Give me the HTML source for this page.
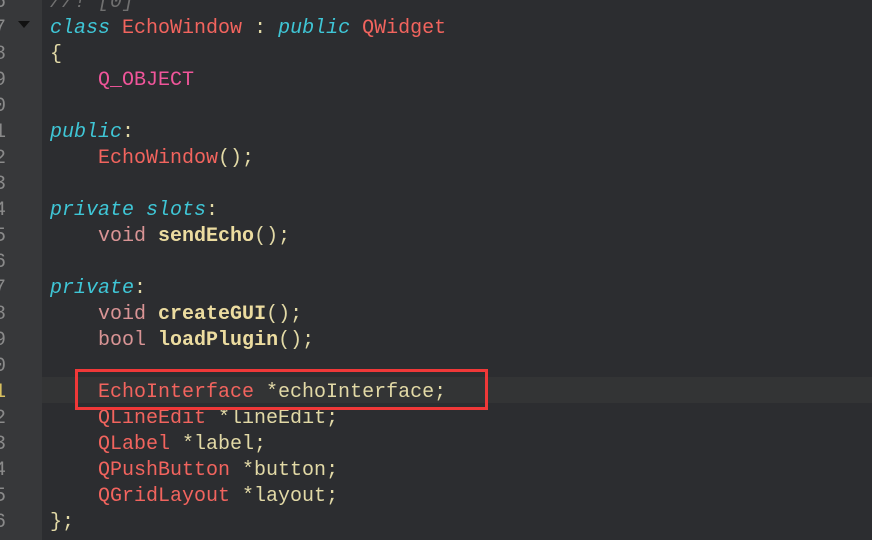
<!DOCTYPE html>
<html><head><meta charset="utf-8"><style>
html,body{margin:0;padding:0;width:872px;height:540px;overflow:hidden;background:#2c2d30;}
.g{position:absolute;left:0;top:0;width:42px;height:540px;background:#37383a;}
.hl{position:absolute;left:42px;top:377px;width:830px;height:26px;background:#333435;}
.ln{position:absolute;left:-10px;font:20px "Liberation Mono",monospace;color:#8a8a8a;width:16px;text-align:right;}
.code{position:absolute;left:50px;top:3px;font:20px/26px "Liberation Mono",monospace;color:#e2d9a6;white-space:pre;}
.lns{position:absolute;left:0;top:3px;}
.l{position:absolute;left:0;height:26px;}
.k{color:#3fc6d6;font-style:italic}
.c{color:#f2645e}
.m{color:#f0559a}
.t{color:#d99495}
.f{color:#ecdca0;font-weight:bold}
.cm{color:#707070;font-style:italic}
.box{position:absolute;left:75px;top:369px;width:407px;height:35px;border:3px solid #f03838;}
.tri{position:absolute;left:18px;top:21px;width:0;height:0;border-left:6px solid transparent;border-right:6px solid transparent;border-top:7px solid #111;}
</style></head><body>
<div class="g"></div>
<div class="hl"></div>
<div class="tri"></div>
<div class="code">
<div class="l" style="top:-13px"><span class="cm">//! [0]</span></div>
<div class="l" style="top:13px"><span class="k">class</span> <span class="c">EchoWindow</span> : <span class="k">public</span> <span class="c">QWidget</span></div>
<div class="l" style="top:39px">{</div>
<div class="l" style="top:65px">    <span class="m">Q_OBJECT</span></div>
<div class="l" style="top:117px"><span class="k">public</span>:</div>
<div class="l" style="top:143px">    <span class="c">EchoWindow</span>();</div>
<div class="l" style="top:195px"><span class="k">private slots</span>:</div>
<div class="l" style="top:221px">    <span class="t">void</span> <span class="f">sendEcho</span>();</div>
<div class="l" style="top:273px"><span class="k">private</span>:</div>
<div class="l" style="top:299px">    <span class="t">void</span> <span class="f">createGUI</span>();</div>
<div class="l" style="top:325px">    <span class="t">bool</span> <span class="f">loadPlugin</span>();</div>
<div class="l" style="top:377px">    <span class="c">EchoInterface</span> *echoInterface;</div>
<div class="l" style="top:403px">    <span class="c">QLineEdit</span> *lineEdit;</div>
<div class="l" style="top:429px">    <span class="c">QLabel</span> *label;</div>
<div class="l" style="top:455px">    <span class="c">QPushButton</span> *button;</div>
<div class="l" style="top:481px">    <span class="c">QGridLayout</span> *layout;</div>
<div class="l" style="top:507px">};</div>
</div>
<div class="lns">
<div class="ln" style="top:-13px;line-height:26px">6</div>
<div class="ln" style="top:13px;line-height:26px">7</div>
<div class="ln" style="top:39px;line-height:26px">8</div>
<div class="ln" style="top:65px;line-height:26px">9</div>
<div class="ln" style="top:91px;line-height:26px">0</div>
<div class="ln" style="top:117px;line-height:26px">1</div>
<div class="ln" style="top:143px;line-height:26px">2</div>
<div class="ln" style="top:169px;line-height:26px">3</div>
<div class="ln" style="top:195px;line-height:26px">4</div>
<div class="ln" style="top:221px;line-height:26px">5</div>
<div class="ln" style="top:247px;line-height:26px">6</div>
<div class="ln" style="top:273px;line-height:26px">7</div>
<div class="ln" style="top:299px;line-height:26px">8</div>
<div class="ln" style="top:325px;line-height:26px">9</div>
<div class="ln" style="top:351px;line-height:26px">0</div>
<div class="ln" style="top:377px;line-height:26px;color:#d8c060">1</div>
<div class="ln" style="top:403px;line-height:26px">2</div>
<div class="ln" style="top:429px;line-height:26px">3</div>
<div class="ln" style="top:455px;line-height:26px">4</div>
<div class="ln" style="top:481px;line-height:26px">5</div>
<div class="ln" style="top:507px;line-height:26px">6</div>
</div>
<div class="box"></div>
</body></html>
